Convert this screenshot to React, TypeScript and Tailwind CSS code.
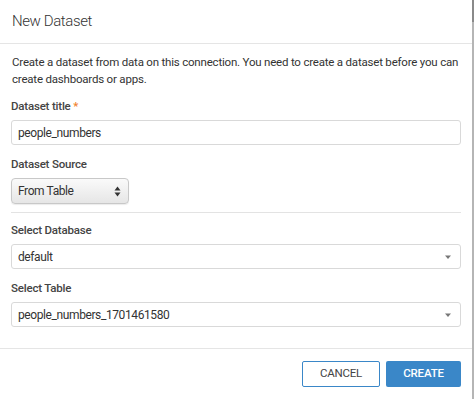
import React from 'react';

const Label = ({ children }: { children: React.ReactNode }) => (
  <div className="text-[11.5px] font-medium text-[#444] tracking-[-0.2px] leading-[13px] mb-[7px]">{children}</div>
);

const Caret = () => (
  <svg width="8" height="6" viewBox="0 0 8 6" className="text-[#777]">
    <path d="M1 1.5h6L4 5z" fill="currentColor" />
  </svg>
);

const SelectBox = ({ value }: { value: string }) => (
  <div className="h-[25px] w-full rounded-[3px] border border-[#d9d9d9] bg-white flex items-center justify-between pl-[6px] pr-[8px] text-[12px] tracking-[-0.4px] text-[#333]">
    <span>{value}</span>
    <Caret />
  </div>
);

const App = () => {
  return (
    <div className="flex w-[474px] h-[399px] overflow-hidden bg-white font-['Roboto',sans-serif]">
      <div className="w-[472px] flex flex-col">
        {/* header */}
        <div className="shrink-0 h-[44px] flex items-center px-[12px] border-b border-[#e5e5e5]">
          <h2 className="text-[15px] font-light text-[#333] tracking-[-0.4px]">New Dataset</h2>
        </div>

        {/* body */}
        <div className="shrink-0 px-[11px] pt-[10px] pb-[21px] border-b border-[#e5e5e5]">
          <p className="text-[11.5px] leading-[17px] tracking-[-0.2px] text-[#333] px-[1px] mb-[12px]">
            Create a dataset from data on this connection. You need to create a dataset before you can create dashboards or apps.
          </p>

          <Label>
            Dataset title <span className="text-[#f0822c]">*</span>
          </Label>
          <div className="h-[25px] w-full rounded-[3px] border border-[#d9d9d9] flex items-center pl-[6px] text-[12px] tracking-[-0.4px] text-[#333] mb-[13px]">
            people_numbers
          </div>

          <Label>Dataset Source</Label>
          <div className="h-[26px] w-[118px] rounded-[4px] border border-[#c8c8c8] bg-gradient-to-b from-[#fafafa] to-[#e6e6e6] shadow-[0_1px_1px_rgba(0,0,0,0.08)] flex items-center justify-between pl-[6px] pr-[7px] text-[12px] tracking-[-0.4px] text-[#333] mb-[8px]">
            <span>From Table</span>
            <svg width="7" height="11" viewBox="0 0 7 11" className="text-[#333]">
              <path d="M3.5 0.5 6.5 4.5h-6zM3.5 10.5 0.5 6.5h6z" fill="currentColor" />
            </svg>
          </div>

          <div className="border-t border-[#e3e3e3] mb-[11px]" />

          <Label>Select Database</Label>
          <div className="mb-[13px]">
            <SelectBox value="default" />
          </div>

          <Label>Select Table</Label>
          <SelectBox value="people_numbers_1701461580" />
        </div>

        {/* footer */}
        <div className="shrink-0 flex justify-end gap-[6px] px-[11px] pt-[12px]">
          <button className="h-[26px] w-[78px] rounded-[2px] border border-[#3a87c8] bg-white text-[11.5px] tracking-[-0.2px] text-[#444]">
            CANCEL
          </button>
          <button className="h-[26px] w-[75px] rounded-[2px] bg-[#3a87c8] text-[11.5px] tracking-[-0.2px] font-medium text-white">
            CREATE
          </button>
        </div>
      </div>

      {/* scrollbar edge */}
      <div className="w-[2px] flex flex-col">
        <div className="h-[22px] bg-[#8a8a8a]" />
        <div className="flex-1 bg-[#b5b5b5]" />
      </div>
    </div>
  );
};

export default App;
